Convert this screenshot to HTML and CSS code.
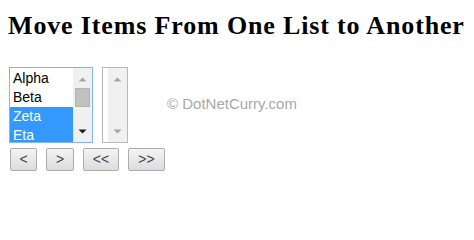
FILE: index.html
```html
<!DOCTYPE html>
<html>
<head>
<meta charset="utf-8">
<title>Move Items From One List to Another</title>
<link rel="stylesheet" href="styles.css">
</head>
<body>
<div class="page">
  <h2 class="title">Move Items From One List to Another</h2>
  <div class="lists">
    <div class="listbox listbox-left">
      <div class="options">
        <div class="option">Alpha</div>
        <div class="option">Beta</div>
        <div class="option selected">Zeta</div>
        <div class="option selected">Eta</div>
      </div>
      <div class="scrollbar">
        <svg class="arrow" width="9" height="5" viewBox="0 0 9 5"><polygon points="0.5,4.5 4.5,0.5 8.5,4.5" fill="#a6a6a6"/></svg>
        <div class="track"><div class="thumb"></div></div>
        <svg class="arrow" width="9" height="5" viewBox="0 0 9 5"><polygon points="0.5,0.5 8.5,0.5 4.5,4.5" fill="#1a1a1a"/></svg>
      </div>
    </div>
    <div class="listbox listbox-right">
      <div class="options"></div>
      <div class="scrollbar">
        <svg class="arrow" width="9" height="5" viewBox="0 0 9 5"><polygon points="0.5,4.5 4.5,0.5 8.5,4.5" fill="#a6a6a6"/></svg>
        <div class="track"></div>
        <svg class="arrow" width="9" height="5" viewBox="0 0 9 5"><polygon points="0.5,0.5 8.5,0.5 4.5,4.5" fill="#a6a6a6"/></svg>
      </div>
    </div>
    <div class="watermark">© DotNetCurry.com</div>
  </div>
  <div class="buttons">
    <button class="btn btn-1">&lt;</button>
    <button class="btn btn-2">&gt;</button>
    <button class="btn btn-3">&lt;&lt;</button>
    <button class="btn btn-4">&gt;&gt;</button>
  </div>
</div>
</body>
</html>
```

FILE: styles.css
```css
html, body {
  margin: 0;
  padding: 0;
  background: #ffffff;
}

.page {
  padding: 12px 0 0 8px;
}

.title {
  margin: 0;
  font-family: "Liberation Serif", "Times New Roman", serif;
  font-weight: bold;
  font-size: 26px;
  line-height: 27px;
  letter-spacing: 0.85px;
  white-space: nowrap;
  color: #000;
}

.lists {
  display: flex;
  align-items: flex-start;
  margin-top: 28px;
  padding-left: 1px;
}

.listbox {
  display: flex;
  height: 76px;
  box-sizing: border-box;
  background: #fff;
  overflow: hidden;
}

.listbox-left {
  width: 84px;
  border: 1px solid #82b6ea;
}

.listbox-right {
  width: 26px;
  margin-left: 9px;
  border: 1px solid #b9b9b9;
}

.options {
  flex: 1;
  padding-top: 1px;
  font-family: "Liberation Sans", Arial, sans-serif;
  font-size: 14px;
  line-height: 19px;
  color: #000;
}

.option {
  padding-left: 3px;
  height: 19px;
}

.option.selected {
  background: #3399ff;
  color: #fff;
}

.scrollbar {
  width: 19px;
  flex: none;
  display: flex;
  flex-direction: column;
  align-items: center;
  background: #f0f0f0;
  padding: 9px 0 8px;
  box-sizing: border-box;
}

.arrow {
  display: block;
  flex: none;
}

.track {
  flex: 1;
  align-self: stretch;
  padding: 6px 2px 0;
}

.thumb {
  height: 19px;
  background: #c1c1c1;
  border: 1px solid #b4b4b4;
  box-sizing: border-box;
}

.watermark {
  margin-left: 39px;
  margin-top: 28px;
  font-family: "Liberation Sans", Arial, sans-serif;
  font-size: 15px;
  line-height: 17px;
  color: #a9a9a9;
}

.buttons {
  display: flex;
  gap: 9px;
  margin-top: 5px;
  padding-left: 2px;
}

.btn {
  height: 23px;
  padding: 0;
  margin: 0;
  border: 1px solid #adadad;
  border-radius: 2px;
  background: linear-gradient(#f4f4f4, #dcdcdc);
  font-family: "Liberation Sans", Arial, sans-serif;
  font-size: 14px;
  color: #444;
  line-height: 21px;
}

.btn-1 { width: 27px; }
.btn-2 { width: 28px; }
.btn-3 { width: 36px; }
.btn-4 { width: 37px; }
```
